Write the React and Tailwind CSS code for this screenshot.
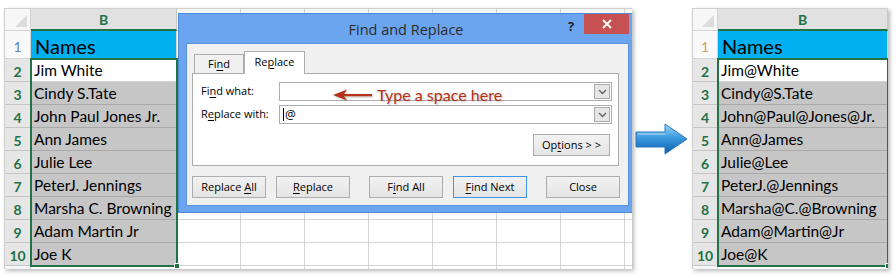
const BEFORE = [
  'Jim White',
  'Cindy S.Tate',
  'John Paul Jones Jr.',
  'Ann James',
  'Julie Lee',
  'PeterJ. Jennings',
  'Marsha C. Browning',
  'Adam Martin Jr',
  'Joe K',
]

const AFTER = [
  'Jim@White',
  'Cindy@S.Tate',
  'John@Paul@Jones@Jr.',
  'Ann@James',
  'Julie@Lee',
  'PeterJ.@Jennings',
  'Marsha@C.@Browning',
  'Adam@Martin@Jr',
  'Joe@K',
]

const EXTRA = ['C', 'D', 'E', 'F', 'G', 'H', 'I']

function Sheet({ names, width, rowHead, colB, extra, oneColor, children }) {
  return (
    <div
      className="relative shrink-0 overflow-hidden border-l border-t border-[#cfcfcf] bg-white shadow-[2px_2px_4px_rgba(0,0,0,0.28)] font-['Lato',sans-serif]"
      style={{ width }}
    >
      {/* column headers */}
      <div className="flex h-[22px]">
        <div
          className="relative shrink-0 border-b border-r border-[#d4d4d4] bg-[#f7f7f7]"
          style={{ width: rowHead }}
        >
          <div className="absolute bottom-[3px] right-[3px] h-0 w-0 border-b-[12px] border-l-[12px] border-b-[#dcdcdc] border-l-transparent" />
        </div>
        <div
          className="flex shrink-0 items-center justify-center border-b-2 border-r border-b-[#217346] border-r-[#c6c6c6] bg-[#e1e1e1] text-[14px] font-bold text-[#217346]"
          style={{ width: colB }}
        >
          B
        </div>
        {extra &&
          EXTRA.map((c) => (
            <div key={c} className="w-[64px] shrink-0 border-b border-r border-[#d4d4d4] bg-[#f7f7f7]" />
          ))}
        <div className="flex-1 border-b border-[#d4d4d4] bg-[#f7f7f7]" />
      </div>

      {/* row 1 */}
      <div className="flex h-[28px]">
        <div
          className="flex shrink-0 items-center justify-center border-b border-r border-[#d4d4d4] bg-[#f9f9f9] pt-[3px] text-[14px]"
          style={{ width: rowHead, color: oneColor }}
        >
          1
        </div>
        <div
          className="flex shrink-0 items-center border-b border-r border-[#d4d4d4] bg-[#00b0f0] pl-[4px] pt-[2px] text-[20px] text-black"
          style={{ width: colB }}
        >
          Names
        </div>
        {extra && EXTRA.map((c) => <div key={c} className="w-[64px] shrink-0 border-b border-r border-[#d4d4d4]" />)}
        <div className="flex-1 border-b border-[#d4d4d4]" />
      </div>

      {names.map((n, i) => (
        <div key={n} className="flex h-[23px]">
          <div
            className="flex shrink-0 items-center justify-center border-b border-r border-[#c6c6c6] bg-[#e6e6e6] pt-[2px] text-[14px] font-bold text-[#217346]"
            style={{ width: rowHead }}
          >
            {i + 2}
          </div>
          <div
            className={`flex shrink-0 items-center overflow-hidden whitespace-nowrap border-b border-r pl-[3px] pt-[2px] text-[15.5px] text-black ${
              i === 0 ? 'border-[#d4d4d4] bg-white' : 'border-[#a9a9a9] bg-[#c6c6c6]'
            }`}
            style={{ width: colB }}
          >
            {n}
          </div>
          {extra && EXTRA.map((c) => <div key={c} className="w-[64px] shrink-0 border-b border-r border-[#d4d4d4]" />)}
          <div className="flex-1 border-b border-[#d4d4d4]" />
        </div>
      ))}

      <div className="flex h-[3px]">
        <div className="shrink-0 border-r border-[#d4d4d4] bg-[#f7f7f7]" style={{ width: rowHead }} />
        <div className="shrink-0 border-r border-[#d4d4d4]" style={{ width: colB }} />
        {extra && EXTRA.map((c) => <div key={c} className="w-[64px] shrink-0 border-r border-[#d4d4d4]" />)}
      </div>

      {/* selection B2:B10 */}
      <div
        className="pointer-events-none absolute top-[49px] h-[209px] border-2 border-[#217346]"
        style={{ left: rowHead - 1, width: colB + 2 }}
      >
        <div className="absolute -bottom-[4px] -right-[4px] h-[6px] w-[6px] border border-white bg-[#217346]" />
      </div>

      {children}
    </div>
  )
}

function Key({ children }) {
  return <span className="underline underline-offset-2">{children}</span>
}

function Chevron() {
  return (
    <svg width="9" height="6" viewBox="0 0 9 6">
      <polyline points="1,1 4.5,4.5 8,1" fill="none" stroke="#606060" strokeWidth="1.3" />
    </svg>
  )
}

function Combo({ children }) {
  return (
    <div className="flex h-[19px] w-[333px] items-stretch border border-[#abadb3] bg-white">
      <div className="flex flex-1 items-center pl-[3px] text-[12px] text-black">{children}</div>
      <div className="m-[1px] flex w-[16px] items-center justify-center border border-[#acacac] bg-[#e6e6e6]">
        <Chevron />
      </div>
    </div>
  )
}

function Btn({ children, primary, className = '' }) {
  return (
    <div
      className={`flex h-[22px] w-[74px] shrink-0 items-center justify-center border bg-gradient-to-b from-[#f2f2f2] to-[#e4e4e4] text-[11px] text-black ${
        primary ? 'border-[#3c95e8]' : 'border-[#adadad]'
      } ${className}`}
    >
      <span>{children}</span>
    </div>
  )
}

function Dialog() {
  return (
    <div className="absolute left-[173px] top-[4px] flex h-[200px] w-[456px] flex-col border border-[#4f8ad6] bg-[#6ba5f0] font-['Open_Sans',sans-serif]">
      <div className="relative flex h-[29px] shrink-0 items-center justify-center">
        <span className="pt-[3px] text-[14.5px] text-[#2b2b2b]">Find and Replace</span>
        <span className="absolute left-[389px] top-[3px] text-[13px] font-bold text-[#222]">?</span>
        <div className="absolute right-[4px] top-0 flex h-[20px] w-[45px] items-center justify-center bg-[#c75050]">
          <svg width="10" height="10" viewBox="0 0 10 10">
            <path d="M1 1 L9 9 M9 1 L1 9" stroke="white" strokeWidth="1.8" />
          </svg>
        </div>
      </div>

      <div className="mb-[6px] ml-[7px] mr-[4px] flex-1 border border-[#5b93da] bg-[#f0f0f0] px-[5px] pt-[7px]">
        <div className="flex h-[22px] items-end pl-[2px]">
          <div className="flex h-[19px] w-[50px] items-center justify-center border border-b-0 border-[#adadad] bg-[#f0f0f0] text-[11px] text-black">
            <span>
              Fi<Key>n</Key>d
            </span>
          </div>
          <div className="relative z-10 -mb-px flex h-[23px] w-[61px] items-center justify-center border border-b-0 border-[#adadad] bg-white pb-[2px] text-[11px] text-black">
            <span>
              Re<Key>p</Key>lace
            </span>
          </div>
        </div>
        <div className="h-[93px] w-[427px] border border-[#adadad] bg-white pl-[8px] pt-[8px]">
          <div className="flex items-center">
            <span className="w-[78px] text-[11px] text-black">
              Fi<Key>n</Key>d what:
            </span>
            <Combo />
          </div>
          <div className="mt-[4px] flex items-center">
            <span className="w-[78px] text-[11px] text-black">
              R<Key>e</Key>place with:
            </span>
            <Combo>
              <span className="mr-[1px] inline-block h-[13px] w-px bg-black" />
              <span>@</span>
            </Combo>
          </div>
          <div className="mt-[10px] flex pl-[332px]">
            <Btn className="w-[77px]">
              Op<Key>t</Key>ions &gt; &gt;
            </Btn>
          </div>
        </div>
        <div className="mt-[10px] flex">
          <Btn>
            Replace <Key>A</Key>ll
          </Btn>
          <Btn className="ml-[10px]">
            <Key>R</Key>eplace
          </Btn>
          <Btn className="ml-[19px]">
            F<Key>i</Key>nd All
          </Btn>
          <Btn primary className="ml-[10px]">
            <Key>F</Key>ind Next
          </Btn>
          <Btn className="ml-[19px]">Close</Btn>
        </div>
      </div>

      {/* annotation */}
      <div className="absolute left-[154px] top-[69px] flex items-center gap-[4px] font-['Lato',sans-serif] text-[16px] text-[#b5331a] [text-shadow:1px_1px_2px_rgba(0,0,0,0.25)]">
        <svg width="40" height="12" viewBox="0 0 40 12" className="drop-shadow-[1px_1px_1px_rgba(0,0,0,0.25)]">
          <path d="M0 6 L14 0.5 L11 5 L39 5 L39 7.2 L11 7.2 L14 11.5 Z" fill="#b5331a" />
        </svg>
        <span>Type a space here</span>
      </div>
    </div>
  )
}

function BlueArrow() {
  return (
    <svg width="54" height="34" viewBox="0 0 54 34">
      <defs>
        <linearGradient id="ag" x1="0" y1="0" x2="0" y2="1">
          <stop offset="0" stopColor="#9fd6f7" />
          <stop offset="0.45" stopColor="#3d9be0" />
          <stop offset="1" stopColor="#0b5fae" />
        </linearGradient>
      </defs>
      <path
        d="M1 10 L30 10 L30 2 L52 17 L30 32 L30 25 L1 25 Z"
        fill="url(#ag)"
        stroke="#2a78bf"
        strokeWidth="1"
        strokeLinejoin="round"
      />
      <path d="M3 12 L30 12" stroke="#d7f0ff" strokeWidth="1" opacity="0.7" />
    </svg>
  )
}

export default function App() {
  return (
    <div className="flex h-[278px] w-[896px] items-start bg-white pl-[4px] pt-[8px]">
      <Sheet names={BEFORE} width={628} rowHead={26} colB={146} extra oneColor="#5b86c5">
        <Dialog />
      </Sheet>
      <div className="w-[60px] shrink-0 pl-[3px] pt-[114px]">
        <BlueArrow />
      </div>
      <Sheet names={AFTER} width={196} rowHead={25} colB={170} oneColor="#d4a25a" />
    </div>
  )
}
